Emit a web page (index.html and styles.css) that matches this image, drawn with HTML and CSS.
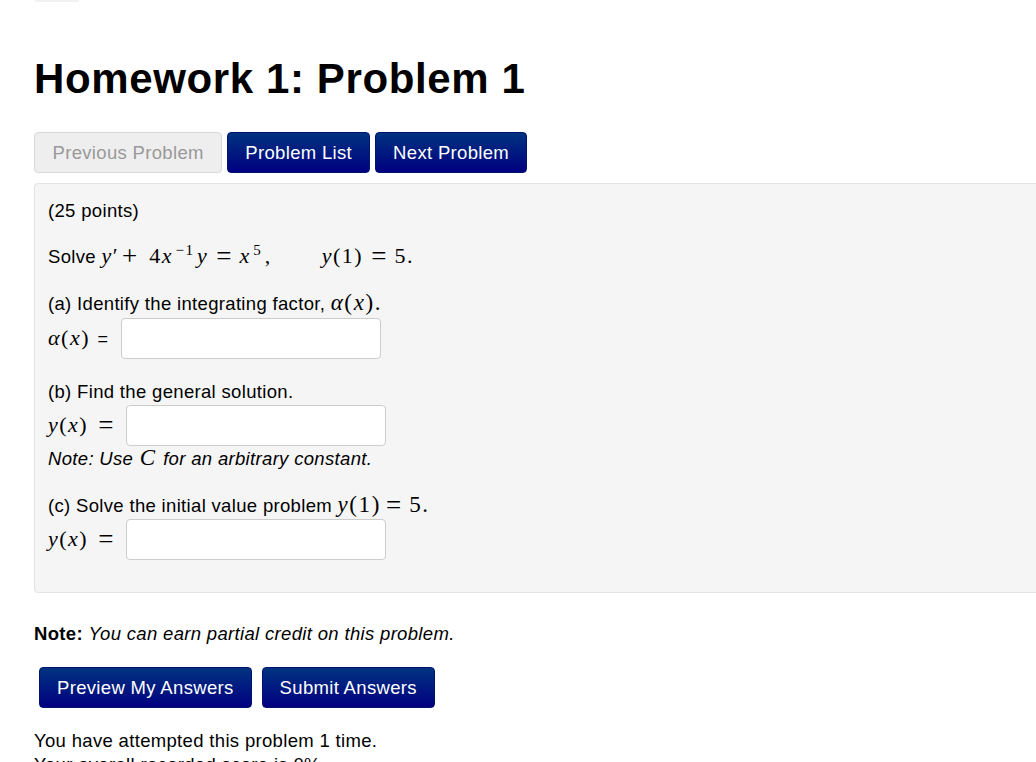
FILE: index.html
```html
<!DOCTYPE html>
<html lang="en">
<head>
    <meta charset="UTF-8">
    <meta name="viewport" content="width=device-width, initial-scale=1.0">
    <title>Homework 1: Problem 1</title>
    <link rel="stylesheet" href="styles.css">
</head>
<body>
    <div class="top-stub"></div>
    <h1>Homework 1: Problem 1</h1>

    <div class="nav-buttons">
        <a href="#" class="btn disabled">Previous Problem</a>
        <a href="#" class="btn">Problem List</a>
        <a href="#" class="btn">Next Problem</a>
    </div>

    <div class="problem">
        <p class="points">(25 points)</p>
        <p class="statement">Solve <span class="math"><i>y</i>&prime;<span class="op plus">+</span>4<i>x</i><sup>&minus;1</sup><i>y</i><span class="op">=</span><i>x</i><sup>5</sup>,</span><span class="math initial"><i>y</i>(1)<span class="op">=</span>5.</span></p>

        <p class="part-a">(a) Identify the integrating factor, <span class="math big"><i>&alpha;</i>(<i>x</i>).</span></p>
        <div class="answer-row first">
            <label class="label-a"><span class="math"><i>&alpha;</i>(<i>x</i>)</span> <span class="small-eq">=</span></label>
            <input type="text">
        </div>

        <p class="part-b">(b) Find the general solution.</p>
        <div class="answer-row second">
            <label class="label-y"><span class="math"><i>y</i>(<i>x</i>)<span class="op">=</span></span></label>
            <input type="text">
        </div>
        <p class="hint"><em>Note: Use <span class="math big"><i>C</i></span> for an arbitrary constant.</em></p>

        <p class="part-c">(c) Solve the initial value problem <span class="math big"><i>y</i>(1)<span class="op">=</span>5.</span></p>
        <div class="answer-row last">
            <label class="label-y"><span class="math"><i>y</i>(<i>x</i>)<span class="op">=</span></span></label>
            <input type="text">
        </div>
    </div>

    <p class="credit"><strong>Note:</strong> <em>You can earn partial credit on this problem.</em></p>

    <div class="submit-buttons">
        <a href="#" class="btn">Preview My Answers</a>
        <a href="#" class="btn">Submit Answers</a>
    </div>

    <p class="attempts">You have attempted this problem 1 time.</p>
    <p class="score">Your overall recorded score is 0%.</p>
</body>
</html>
```

FILE: styles.css
```css
/* Global styles */
* {
    margin: 0;
    padding: 0;
    box-sizing: border-box;
}

html, body {
    height: 762px;
    overflow: hidden;
}

body {
    font-family: "Liberation Sans", Arial, sans-serif;
    font-size: 18.5px;
    letter-spacing: 0.33px;
    line-height: 24px;
    color: #000;
    background-color: #fff;
    padding-left: 34px;
    width: 1140px;
}

.top-stub {
    width: 44px;
    height: 2px;
    margin-left: 1px;
    background-color: #f1f1f1;
    border-radius: 0 0 4px 4px;
}

h1 {
    font-size: 42px;
    line-height: 50px;
    font-weight: bold;
    margin-top: 52px;
    margin-bottom: 28px;
    letter-spacing: 0.62px;
}

/* Buttons */
.btn {
    display: inline-block;
    height: 41px;
    line-height: 40px;
    padding: 0 17px;
    color: #fff;
    text-decoration: none;
    border: 1px solid #00146e;
    border-radius: 4px;
    background: linear-gradient(to bottom, #003380, #000080);
}

.btn.disabled {
    padding: 0 17.5px;
    color: #999;
    background: #eee;
    border-color: #d9d9d9;
}

.nav-buttons {
    display: flex;
    gap: 5px;
    margin-bottom: 10px;
}

/* Problem panel */
.problem {
    width: 1100px;
    height: 410px;
    padding: 15px 13px;
    background-color: #f5f5f5;
    border: 1px solid #e3e3e3;
    border-radius: 4px;
}

.math {
    font-family: "Liberation Serif", "Times New Roman", serif;
    font-size: 22px;
    letter-spacing: 1.5px;
}

.math.big {
    font-size: 23px;
    letter-spacing: 1.6px;
}

.math sup {
    font-size: 15px;
    line-height: 0;
    margin: 0 2.5px;
}

.op {
    font-size: 27px;
    line-height: 0;
    letter-spacing: 0;
    vertical-align: -1.5px;
    margin: 0 8px;
}

.op.plus {
    margin: 0 12px 0 3px;
}

.math.big .op {
    margin: 0 8px 0 5px;
}

.initial {
    margin-left: 50px;
}

.small-eq {
    font-family: "Liberation Sans", Arial, sans-serif;
    font-size: 18px;
    margin-left: 2px;
}

.statement {
    margin-top: 21px;
}

.part-a {
    margin-top: 22px;
}

.answer-row {
    display: flex;
    align-items: center;
    height: 41px;
}

.answer-row.first {
    margin-top: 2px;
}

.answer-row.second {
    margin-top: 1px;
}

.answer-row.last {
    margin-top: 1px;
}

.label-a {
    width: 73px;
}

.label-y {
    width: 78px;
}

.label-y .op {
    margin-left: 10px;
}

.answer-row input {
    width: 260px;
    height: 41px;
    background-color: #fff;
    border: 1px solid #ccc;
    border-radius: 4px;
}

.part-b {
    margin-top: 21px;
}

.hint .math {
    margin: 0 1px;
}

.part-c {
    margin-top: 22px;
}

.credit {
    margin-top: 29px;
}

.submit-buttons {
    display: flex;
    gap: 10px;
    margin: 21px 0 21px 5px;
}
```
